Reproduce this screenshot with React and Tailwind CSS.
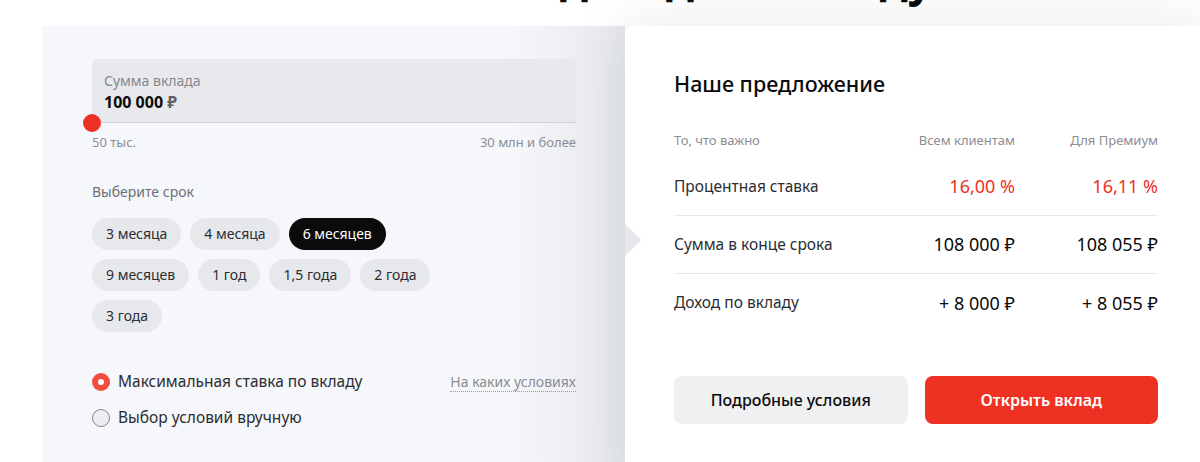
import React from "react";

const terms = [
  ["3 месяца", "4 месяца", "6 месяцев"],
  ["9 месяцев", "1 год", "1,5 года", "2 года"],
  ["3 года"],
];

function Chip({ label, active }) {
  return (
    <button
      className={
        active
          ? "h-8 px-[14px] rounded-full bg-[#0b0b0b] text-white text-[14px] leading-8"
          : "h-8 px-[14px] rounded-full bg-[#e7e8eb] text-[#2b2d33] text-[14px] leading-8"
      }
    >
      {label}
    </button>
  );
}

function Row({ label, a, b, red, last }) {
  return (
    <div
      className={
        "grid grid-cols-[1fr_160px_143px] items-center h-[58px] " +
        (last ? "" : "border-b border-[#e7e8eb]")
      }
    >
      <div className="text-[15.5px] text-[#2b2d33]">{label}</div>
      <div className={"text-right text-[18px] " + (red ? "text-[#ef3124]" : "text-[#0b0b0b]")}>{a}</div>
      <div className={"text-right text-[18px] " + (red ? "text-[#ef3124]" : "text-[#0b0b0b]")}>{b}</div>
    </div>
  );
}

export default function App() {
  return (
    <div className="w-[1200px] h-[462px] overflow-hidden bg-white font-['Noto_Sans',sans-serif] text-[#0b0b0b]">
      <h2 className="-mt-[47px] h-[52px] text-center text-[44px] leading-[52px] font-bold whitespace-nowrap">
        Рассчитайте доход по вкладу
      </h2>
      <div className="mt-[21px] flex pl-[42px]">
        {/* Left panel */}
        <div className="relative w-[583px] h-[460px] shrink-0 bg-[linear-gradient(90deg,#f6f7fa_80%,#e6e8ec_100%)] pl-[50px] pr-[49px] pt-[33px]">
          <div className="relative">
            <div className="h-[64px] rounded-t-[6px] bg-[#e8e9ec] border-b-[1.5px] border-[#cfd2d7] pl-[12px] pt-[12px]">
              <div className="text-[14px] leading-[20px] text-[#86888f]">Сумма вклада</div>
              <div className="text-[16px] leading-[22px] font-bold text-[#0b0b0b]">
                100 000 <span className="text-[#5e6068]">₽</span>
              </div>
            </div>
            <div className="absolute left-[-9px] top-[55px] w-[18px] h-[18px] rounded-full bg-[#ef3124]" />
          </div>
          <div className="mt-[9px] flex justify-between text-[13px] leading-[20px] text-[#8b8d93]">
            <span>50 тыс.</span>
            <span>30 млн и более</span>
          </div>
          <div className="mt-[30px] text-[14px] leading-[20px] text-[#6d7078]">Выберите срок</div>
          <div className="mt-[16px] flex flex-col gap-[9px]">
            {terms.map((row, i) => (
              <div key={i} className="flex gap-[9px]">
                {row.map((t) => (
                  <Chip key={t} label={t} active={t === "6 месяцев"} />
                ))}
              </div>
            ))}
          </div>
          <div className="mt-[39px] flex flex-col gap-[14px]">
            <div className="flex items-center justify-between h-[22px]">
              <div className="flex items-center gap-[8px]">
                <div className="w-[18px] h-[18px] rounded-full bg-[#f04d40] flex items-center justify-center">
                  <div className="w-[6px] h-[6px] rounded-full bg-white" />
                </div>
                <span className="text-[15.5px] text-[#2b2d33]">Максимальная ставка по вкладу</span>
              </div>
              <span className="text-[14px] leading-[18px] text-[#8b8d93] border-b border-dotted border-[#9a9ca2]">
                На каких условиях
              </span>
            </div>
            <div className="flex items-center gap-[8px] h-[22px]">
              <div className="w-[18px] h-[18px] rounded-full border-[1.5px] border-[#85878c] bg-[#eceef1]" />
              <span className="text-[15.5px] text-[#2b2d33]">Выбор условий вручную</span>
            </div>
          </div>
        </div>
        {/* Right card */}
        <div className="relative w-[582px] h-[460px] shrink-0 bg-white rounded-tl-[8px] shadow-[0_0_60px_rgba(20,30,50,0.10)] pl-[49px] pr-[49px] pt-[44px]">
          <div className="absolute left-0 top-[198px] w-0 h-0 border-y-[16px] border-y-transparent border-l-[16px] border-l-[#e4e6ea]" />
          <div className="text-[21.5px] leading-[28px] font-medium">Наше предложение</div>
          <div className="mt-[28px] grid grid-cols-[1fr_160px_143px] items-center h-[30px] text-[13px] text-[#8b8d93]">
            <div>То, что важно</div>
            <div className="text-right">Всем клиентам</div>
            <div className="text-right">Для Премиум</div>
          </div>
          <div className="mt-[2px]">
            <Row label="Процентная ставка" a="16,00 %" b="16,11 %" red />
            <Row label="Сумма в конце срока" a="108 000 ₽" b="108 055 ₽" />
            <Row label="Доход по вкладу" a="+ 8 000 ₽" b="+ 8 055 ₽" last />
          </div>
          <div className="mt-[44px] flex gap-[17px]">
            <button className="flex-1 h-[48px] rounded-[8px] bg-[#eff0f2] text-[16px] font-medium text-[#0b0b0b]">
              Подробные условия
            </button>
            <button className="flex-1 h-[48px] rounded-[8px] bg-[#ef3124] text-[16px] font-semibold text-white">
              Открыть вклад
            </button>
          </div>
        </div>
      </div>
    </div>
  );
}
